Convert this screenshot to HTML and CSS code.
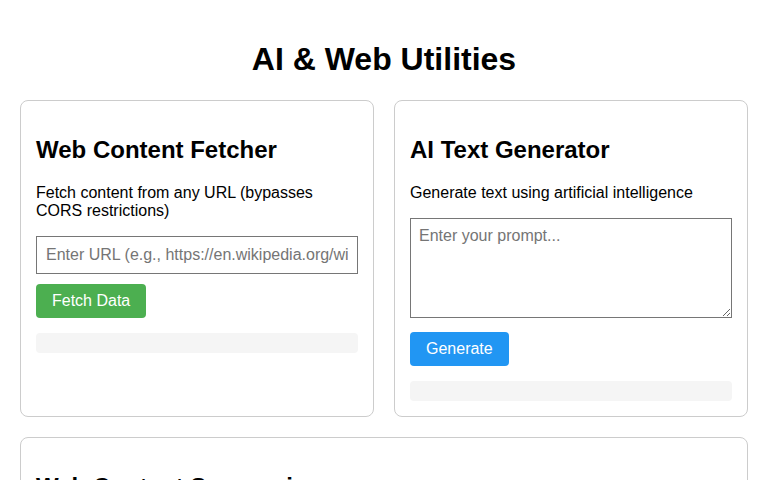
FILE: index.html
```html
<!DOCTYPE html>
<html lang="en">
<head>
<meta charset="utf-8">
<title>AI &amp; Web Utilities</title>
<link rel="stylesheet" href="styles.css">
</head>
<body>
<h1 class="title">AI &amp; Web Utilities</h1>
<div class="grid">
  <section class="card">
    <h2>Web Content Fetcher</h2>
    <p>Fetch content from any URL (bypasses CORS restrictions)</p>
    <input class="field" type="text" placeholder="Enter URL (e.g., https://en.wikipedia.org/wiki/Artificial_intelligence)">
    <button class="btn btn-green">Fetch Data</button>
    <div class="result"></div>
  </section>
  <section class="card">
    <h2>AI Text Generator</h2>
    <p>Generate text using artificial intelligence</p>
    <textarea class="area" placeholder="Enter your prompt..."></textarea>
    <button class="btn btn-blue">Generate</button>
    <div class="result"></div>
  </section>
  <section class="card wide">
    <h2>Web Content Summarizer</h2>
    <p>Fetch a web page and summarize its content with AI</p>
  </section>
</div>
</body>
</html>
```
FILE: styles.css
```css
html, body {
  margin: 0;
  background: #fff;
}
body {
  padding: 20px;
  font-family: "Liberation Sans", Arial, sans-serif;
  font-size: 16px;
  color: #000;
}
.title {
  text-align: center;
  font-size: 32px;
  margin: 21.44px 0;
}
.grid {
  display: grid;
  grid-template-columns: 1fr 1fr;
  gap: 20px;
}
.card {
  border: 1px solid #ccc;
  border-radius: 8px;
  padding: 15px;
}
.wide {
  grid-column: span 2;
}
.card h2 {
  font-size: 24px;
  margin: 19.92px 0;
}
.card p {
  margin: 16px 0;
}
.field {
  display: block;
  width: 100%;
  height: 38px;
  box-sizing: border-box;
  padding: 0 9px;
  font-family: inherit;
  font-size: 16px;
  border: 1px solid #767676;
  border-radius: 0;
  margin: 0 0 10px;
}
.field::placeholder, .area::placeholder {
  color: #757575;
}
.area {
  display: block;
  width: 100%;
  height: 100px;
  box-sizing: border-box;
  padding: 8px;
  font-family: inherit;
  font-size: 16px;
  border: 1px solid #767676;
  margin: 0 0 14px;
}
.btn {
  display: block;
  border: none;
  border-radius: 4px;
  padding: 8px 16px;
  font-family: inherit;
  font-size: 16px;
  color: #fff;
  line-height: 18px;
}
.btn-green { background: #4caf50; }
.btn-blue { background: #2196f3; }
.result {
  margin-top: 15px;
  height: 20px;
  background: #f5f5f5;
  border-radius: 4px;
}
```
